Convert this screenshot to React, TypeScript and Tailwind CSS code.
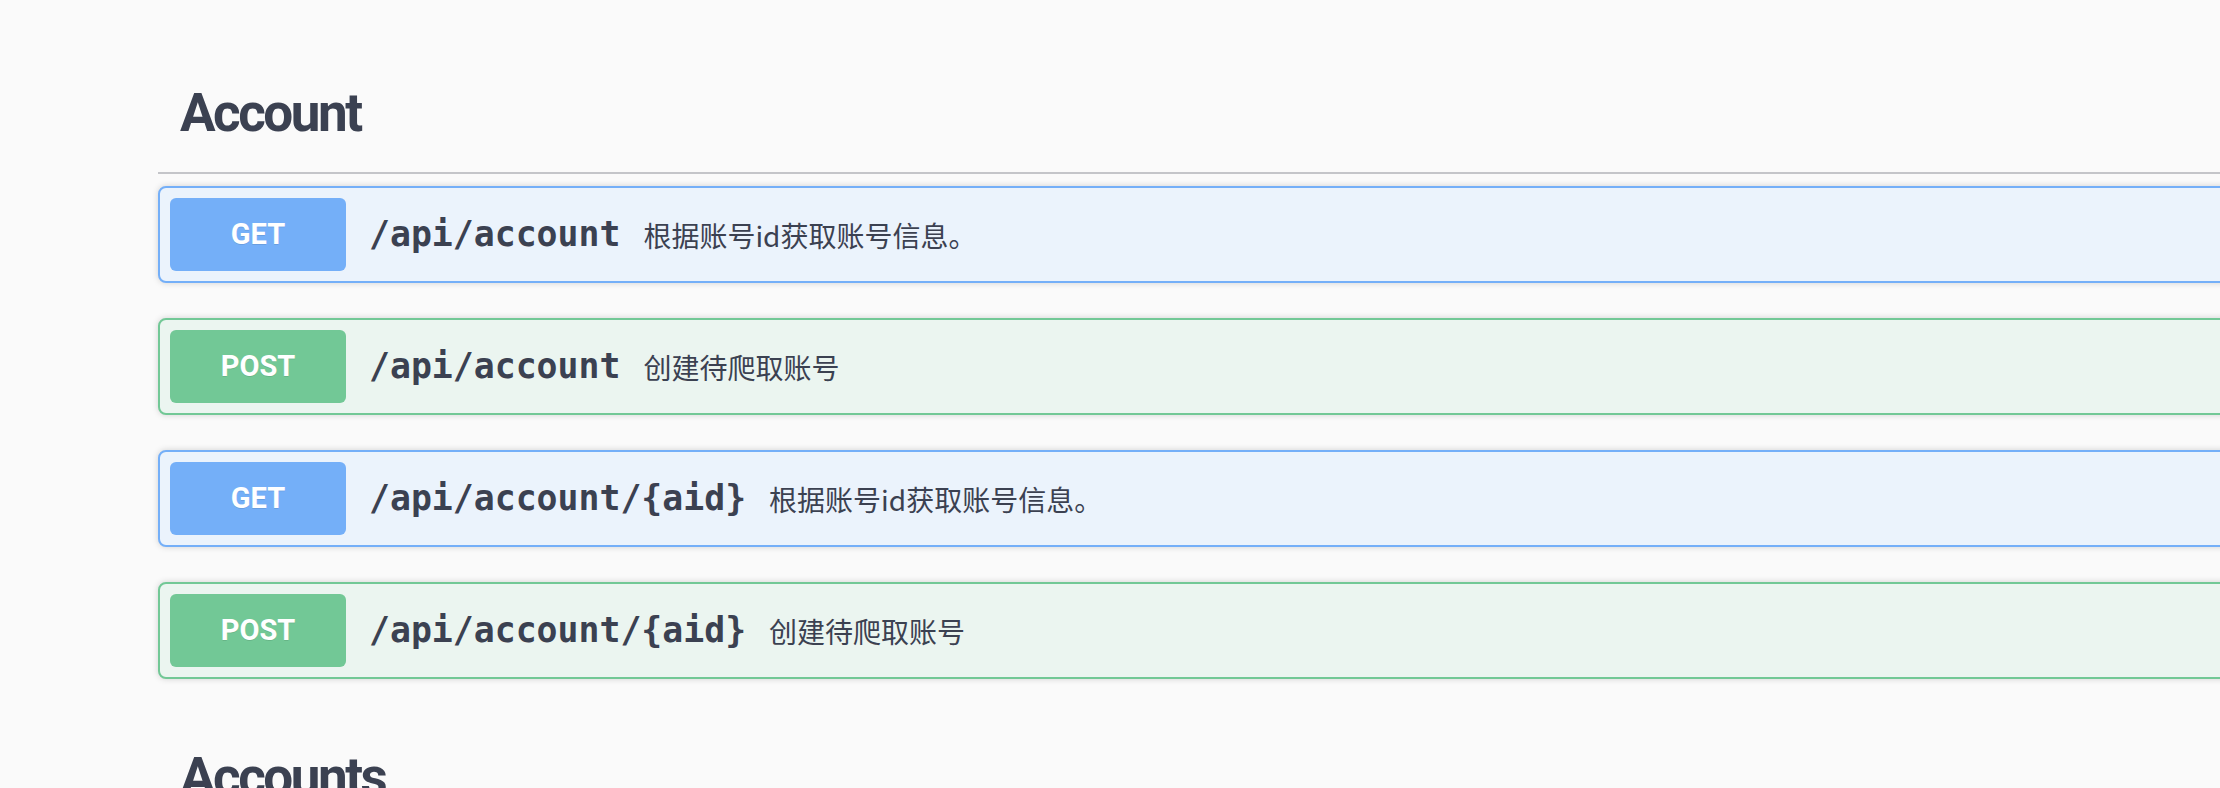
import React from 'react';

type Method = 'GET' | 'POST';

interface Endpoint {
  method: Method;
  path: string;
  summary: string;
}

const sections: { tag: string; endpoints: Endpoint[] }[] = [
  {
    tag: 'Account',
    endpoints: [
      { method: 'GET', path: '/api/account', summary: '根据账号id获取账号信息。' },
      { method: 'POST', path: '/api/account', summary: '创建待爬取账号' },
      { method: 'GET', path: '/api/account/{aid}', summary: '根据账号id获取账号信息。' },
      { method: 'POST', path: '/api/account/{aid}', summary: '创建待爬取账号' },
    ],
  },
  {
    tag: 'Accounts',
    endpoints: [
      { method: 'GET', path: '/api/accounts', summary: '获取账号列表' },
    ],
  },
];

const styles: Record<Method, { row: string; badge: string }> = {
  GET: {
    row: 'bg-[#ebf3fc] border-[#74aff8]',
    badge: 'bg-[#74aff8]',
  },
  POST: {
    row: 'bg-[#ebf5f0] border-[#72c896]',
    badge: 'bg-[#72c896]',
  },
};

const OperationRow: React.FC<{ op: Endpoint }> = ({ op }) => {
  const s = styles[op.method];
  return (
    <div
      className={`flex items-center h-[97px] px-[10px] border-2 rounded-[8px] shadow-[0_0_6px_rgba(0,0,0,0.17)] ${s.row}`}
    >
      <span
        className={`w-[176px] h-[73px] rounded-[6px] flex items-center justify-center text-white font-bold text-[29px] [text-shadow:0_1px_0_rgba(0,0,0,0.1)] ${s.badge}`}
        style={{ fontFamily: 'Roboto, "Noto Sans", sans-serif' }}
      >
        {op.method}
      </span>
      <span
        className="pl-[23px] pr-[23px] text-[34.8px] font-bold text-[#3b4151]"
        style={{ fontFamily: '"DejaVu Sans Mono", "Liberation Mono", monospace' }}
      >
        {op.path}
      </span>
      <span
        className="text-[28px] text-[#3b4151]"
        style={{ fontFamily: '"Noto Sans CJK SC", "Noto Sans", sans-serif' }}
      >
        {op.summary}
      </span>
    </div>
  );
};

export default function App() {
  return (
    <div className="h-[788px] overflow-hidden bg-[#fafafa]">
      <div className="w-[2320px] pl-[158px] pt-[61px]">
        {sections.map(section => (
          <div key={section.tag} className="mb-[46px]">
            {/* tag heading */}
            <h3
              className="pt-[20px] pb-[27px] pl-[22px] border-b-2 border-[#c4c5c9] text-[53px] leading-[64px] font-bold tracking-[-2.5px] text-[#3b4151]"
              style={{ fontFamily: 'Roboto, "Noto Sans", sans-serif' }}
            >
              {section.tag}
            </h3>
            <div className="mt-[12px] flex flex-col gap-[35px]">
              {section.endpoints.map((op, i) => (
                <OperationRow key={i} op={op} />
              ))}
            </div>
          </div>
        ))}
      </div>
    </div>
  );
}
